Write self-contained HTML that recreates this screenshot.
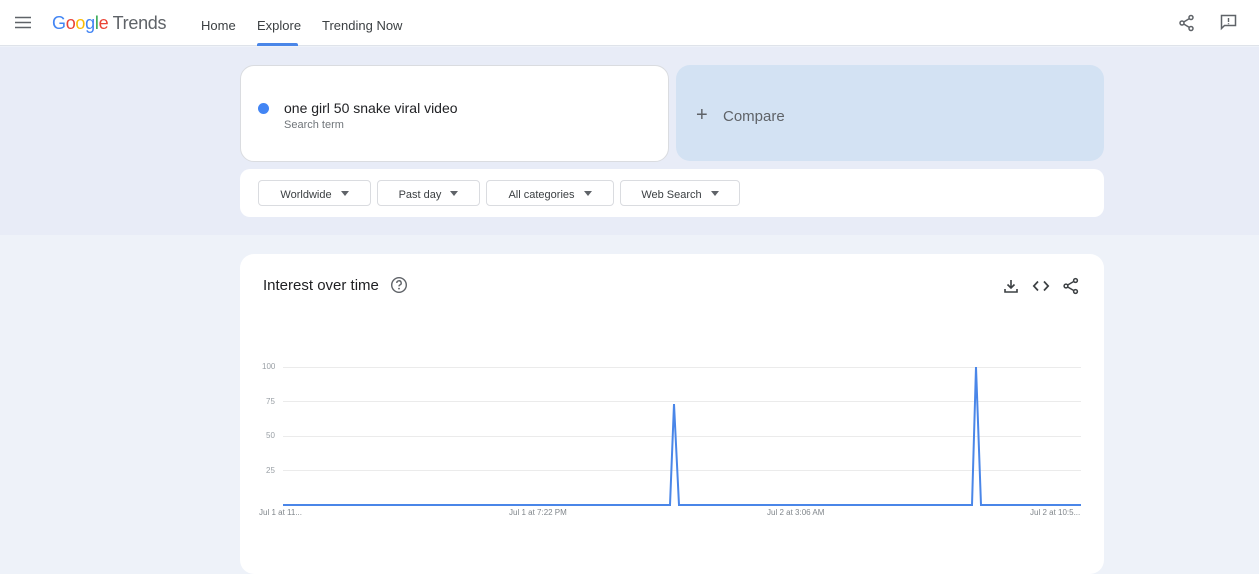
<!DOCTYPE html>
<html><head><style>
*{box-sizing:border-box;margin:0;padding:0}
body{width:1259px;height:563px;overflow:hidden;font-family:"Liberation Sans",sans-serif;background:#eef2f9;position:relative}
.hdr{position:absolute;left:0;top:0;width:1259px;height:46px;background:#fff;border-bottom:1px solid #dfe3ea}
.top{position:absolute;left:0;top:47px;width:1259px;height:188px;background:#e8ecf7}
.abs{position:absolute}
.nav{position:absolute;top:17px;font-size:13px;color:#3c4043}
.card{position:absolute;background:#fff;border-radius:14px}
.dd{position:absolute;top:180px;height:26px;padding-top:3px;border:1px solid #dadce0;border-radius:4px;background:#fff;font-size:11px;color:#3c4043;display:flex;align-items:center;justify-content:center;gap:9px}
.tri{width:0;height:0;border-left:4px solid transparent;border-right:4px solid transparent;border-top:5px solid #5f6368;margin-top:-3px}
.yl{position:absolute;left:262px;font-size:8px;color:#9aa0a6}
.gl{position:absolute;left:283px;width:798px;height:1px;background:#ebebeb}
.xl{position:absolute;top:508px;font-size:8px;color:#80868b}
</style></head><body>
<div class="hdr">
 <svg class="abs" style="left:15px;top:16px" width="16" height="13"><path d="M0 1.5h16M0 6.5h16M0 11.5h16" stroke="#5f6368" stroke-width="1.6"/></svg>
 <div class="abs" style="left:52px;top:13px;font-size:18px;letter-spacing:-0.3px"><span style="color:#4285f4">G</span><span style="color:#ea4335">o</span><span style="color:#fbbc05">o</span><span style="color:#4285f4">g</span><span style="color:#34a853">l</span><span style="color:#ea4335">e</span><span style="color:#5f6368"> Trends</span></div>
 <div class="nav" style="left:201px;top:18px">Home</div>
 <div class="nav" style="left:257px;top:18px">Explore</div>
 <div class="abs" style="left:257px;top:43px;width:41px;height:3px;background:#4a86e8;border-radius:2px 2px 0 0"></div>
 <div class="nav" style="left:322px;top:18px">Trending Now</div>
 <svg class="abs" style="left:1178px;top:14px" width="18" height="18" viewBox="0 0 18 18"><circle cx="13" cy="3.5" r="2" fill="none" stroke="#5f6368" stroke-width="1.5"/><circle cx="4" cy="9" r="2" fill="none" stroke="#5f6368" stroke-width="1.5"/><circle cx="13" cy="14.5" r="2" fill="none" stroke="#5f6368" stroke-width="1.5"/><path d="M5.7 8l5.6-3.4M5.7 10l5.6 3.4" stroke="#5f6368" stroke-width="1.5"/></svg>
 <svg class="abs" style="left:1220px;top:14px" width="17" height="17" viewBox="0 0 17 17"><path d="M1.5 1.5h14v10h-11l-3 3z" fill="none" stroke="#5f6368" stroke-width="1.5"/><path d="M8.5 4v4M8.5 9.3v1" stroke="#5f6368" stroke-width="1.4"/></svg>
</div>
<div class="top"></div>
<div class="card" style="left:240px;top:65px;width:429px;height:97px;border:1px solid #dadce0">
 <div class="abs" style="left:17px;top:37px;width:11px;height:11px;border-radius:50%;background:#4285f4"></div>
 <div class="abs" style="left:43px;top:34px;font-size:14px;color:#202124">one girl 50 snake viral video</div>
 <div class="abs" style="left:43px;top:53px;font-size:11px;color:#70757a">Search term</div>
</div>
<div class="card" style="left:676px;top:65px;width:428px;height:96px;background:#d3e2f3">
 <div class="abs" style="left:20px;top:40px;font-size:20px;color:#5f6368;line-height:20px">+</div>
 <div class="abs" style="left:47px;top:43px;font-size:15px;color:#5f6368">Compare</div>
</div>
<div class="card" style="left:240px;top:169px;width:864px;height:48px;border-radius:10px"></div>
<div class="dd" style="left:258px;width:113px">Worldwide <span class="tri"></span></div>
<div class="dd" style="left:377px;width:103px">Past day <span class="tri"></span></div>
<div class="dd" style="left:486px;width:128px">All categories <span class="tri"></span></div>
<div class="dd" style="left:620px;width:120px">Web Search <span class="tri"></span></div>
<div class="card" style="left:240px;top:254px;width:864px;height:320px"></div>
<div class="abs" style="left:263px;top:277px;font-size:15px;color:#202124">Interest over time</div>
<svg class="abs" style="left:390px;top:276px" width="18" height="18" viewBox="0 0 18 18"><circle cx="9" cy="9" r="7.3" fill="none" stroke="#5f6368" stroke-width="1.4"/><path d="M6.8 7a2.2 2.2 0 1 1 3 2c-.6.3-.8.7-.8 1.4" fill="none" stroke="#5f6368" stroke-width="1.4"/><circle cx="9" cy="12.6" r=".9" fill="#5f6368"/></svg>
<svg class="abs" style="left:1003px;top:278px" width="16" height="16" viewBox="0 0 16 16"><path d="M8 2v8M4.5 6.5L8 10l3.5-3.5M2 11v3h12v-3" fill="none" stroke="#3c4043" stroke-width="1.6"/></svg>
<svg class="abs" style="left:1032px;top:278px" width="18" height="16" viewBox="0 0 18 16"><path d="M6 3.5L1.8 8 6 12.5M12 3.5L16.2 8 12 12.5" fill="none" stroke="#3c4043" stroke-width="1.7"/></svg>
<svg class="abs" style="left:1062px;top:277px" width="18" height="18" viewBox="0 0 18 18"><circle cx="13.5" cy="3.5" r="1.9" fill="none" stroke="#3c4043" stroke-width="1.5"/><circle cx="4" cy="9" r="1.9" fill="none" stroke="#3c4043" stroke-width="1.5"/><circle cx="13.5" cy="14.5" r="1.9" fill="none" stroke="#3c4043" stroke-width="1.5"/><path d="M5.7 8l6-3.5M5.7 10l6 3.5" stroke="#3c4043" stroke-width="1.5"/></svg>
<div class="gl" style="top:367px"></div><div class="gl" style="top:401px"></div><div class="gl" style="top:436px"></div><div class="gl" style="top:470px"></div>
<div class="yl" style="top:362px">100</div><div class="yl" style="top:397px;left:266px">75</div><div class="yl" style="top:431px;left:266px">50</div><div class="yl" style="top:466px;left:266px">25</div>
<svg class="abs" style="left:0;top:0" width="1259" height="563"><polyline points="283,505 670,505 674,404 679,505 972,505 976,367 981,505 1081,505" fill="none" stroke="#4a86e8" stroke-width="2"/></svg>
<div class="xl" style="left:259px">Jul 1 at 11...</div>
<div class="xl" style="left:509px">Jul 1 at 7:22 PM</div>
<div class="xl" style="left:767px">Jul 2 at 3:06 AM</div>
<div class="xl" style="left:1030px">Jul 2 at 10:5...</div>
</body></html>
